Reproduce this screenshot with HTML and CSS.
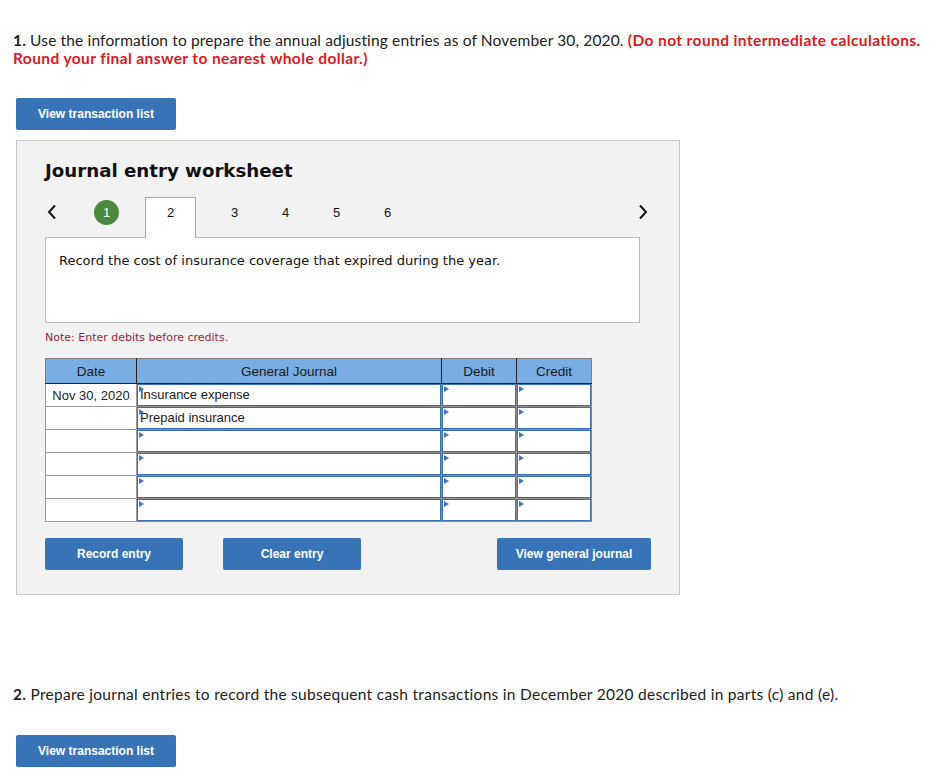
FILE: index.html
```html
<!DOCTYPE html>
<html lang="en">
<head>
<meta charset="utf-8">
<title>Journal entry worksheet</title>
<link rel="stylesheet" href="styles.css">
</head>
<body>
<div class="page">
  <p class="question q1"><b>1.</b> Use the information to prepare the annual adjusting entries as of November 30, 2020. <span class="warn">(Do not round intermediate calculations.</span><br><span class="warn">Round your final answer to nearest whole dollar.)</span></p>
  <button class="btn btn-list">View transaction list</button>

  <section class="panel">
    <h2 class="title">Journal entry worksheet</h2>
    <div class="nav">
      <span class="chev chev-left"><svg width="10" height="16" viewBox="0 0 10 16"><path d="M8 1.5 L2 8 L8 14.5" fill="none" stroke="#111" stroke-width="2"/></svg></span>
      <span class="step"><span class="done">1</span></span>
      <span class="step tab">2</span>
      <span class="step">3</span>
      <span class="step">4</span>
      <span class="step">5</span>
      <span class="step">6</span>
      <span class="chev chev-right"><svg width="10" height="16" viewBox="0 0 10 16"><path d="M2 1.5 L8 8 L2 14.5" fill="none" stroke="#111" stroke-width="2"/></svg></span>
    </div>
    <div class="prompt">Record the cost of insurance coverage that expired during the year.</div>
    <p class="note">Note: Enter debits before credits.</p>

    <table class="journal">
      <thead>
        <tr><th class="c-date">Date</th><th class="c-gj">General Journal</th><th class="c-amt">Debit</th><th class="c-amt">Credit</th></tr>
      </thead>
      <tbody>
        <tr><td class="date">Nov 30, 2020</td><td class="in"><div class="box">Insurance expense<i class="tri"></i></div></td><td class="in"><div class="box"><i class="tri"></i></div></td><td class="in"><div class="box"><i class="tri"></i></div></td></tr>
        <tr><td class="date"></td><td class="in"><div class="box">Prepaid insurance<i class="tri"></i></div></td><td class="in"><div class="box"><i class="tri"></i></div></td><td class="in"><div class="box"><i class="tri"></i></div></td></tr>
        <tr><td class="date"></td><td class="in"><div class="box"><i class="tri"></i></div></td><td class="in"><div class="box"><i class="tri"></i></div></td><td class="in"><div class="box"><i class="tri"></i></div></td></tr>
        <tr><td class="date"></td><td class="in"><div class="box"><i class="tri"></i></div></td><td class="in"><div class="box"><i class="tri"></i></div></td><td class="in"><div class="box"><i class="tri"></i></div></td></tr>
        <tr><td class="date"></td><td class="in"><div class="box"><i class="tri"></i></div></td><td class="in"><div class="box"><i class="tri"></i></div></td><td class="in"><div class="box"><i class="tri"></i></div></td></tr>
        <tr><td class="date"></td><td class="in"><div class="box"><i class="tri"></i></div></td><td class="in"><div class="box"><i class="tri"></i></div></td><td class="in"><div class="box"><i class="tri"></i></div></td></tr>
      </tbody>
    </table>

    <div class="actions">
      <button class="btn btn-record">Record entry</button>
      <button class="btn btn-clear">Clear entry</button>
      <button class="btn btn-journal">View general journal</button>
    </div>
  </section>

  <p class="question q2"><b>2.</b> Prepare journal entries to record the subsequent cash transactions in December 2020 described in parts (c) and (e).</p>
  <button class="btn btn-list">View transaction list</button>
</div>
</body>
</html>
```
FILE: styles.css
```css
* { box-sizing: border-box; }
html, body { margin: 0; padding: 0; background: #fff; }
.page {
  padding: 31px 0 0 16px;
  font-family: Lato, "Liberation Sans", sans-serif;
  color: #222;
}
.question {
  margin: 0 0 0 -3px;
  font-size: 15.5px;
  letter-spacing: 0.15px;
  line-height: 18px;
  width: 925px;
}
.q2 { letter-spacing: 0.28px; }
.question b { font-weight: 700; }
.warn { color: #e0191e; font-weight: 700; letter-spacing: 0.4px; }

.btn {
  display: block;
  flex: none;
  height: 32px;
  border: 0;
  border-radius: 2px;
  background: #3873b7;
  color: #fff;
  font-family: "Liberation Sans", Arial, sans-serif;
  font-weight: 700;
  font-size: 12px;
  padding: 0;
  cursor: pointer;
}
.btn-list { width: 160px; margin-top: 31px; }

.panel {
  width: 664px;
  height: 455px;
  margin-top: 10px;
  background: #f2f2f2;
  border: 1px solid #c8c8c8;
  padding: 19px 39px 0 28px;
}
.title {
  margin: 0;
  font-family: "DejaVu Sans", sans-serif;
  font-weight: 700;
  font-size: 18.2px;
  line-height: 22px;
  color: #111;
}
.nav {
  display: flex;
  align-items: flex-start;
  height: 40px;
  margin: 15px -12px 0 0;
  font-family: "Liberation Sans", Arial, sans-serif;
  font-size: 13px;
  color: #111;
}
.chev { display: flex; align-items: center; height: 30px; width: 36px; padding-left: 2px; }
.chev-right { margin-left: auto; width: auto; padding: 0 4px 0 0; }
.step {
  width: 51px;
  height: 30px;
  display: flex;
  align-items: center;
  justify-content: center;
}
.done {
  width: 25px;
  height: 25px;
  border-radius: 50%;
  background: #4b8a3d;
  color: #fff;
  display: flex;
  align-items: center;
  justify-content: center;
  font-size: 13px;
}
.tab {
  width: 51px;
  margin: 0 13px;
  background: #fff;
  border: 1px solid #a8a8a8;
  border-bottom: 0;
  position: relative;
  z-index: 1;
  height: 41px;
  padding-bottom: 11px;
}
.prompt {
  height: 86px;
  margin-top: 0;
  background: #fff;
  border: 1px solid #bdbdbd;
  padding: 15px 13px;
  font-family: "DejaVu Sans", sans-serif;
  font-size: 13px;
  line-height: 16px;
  color: #111;
}
.note {
  margin: 8px 0 0;
  font-family: "DejaVu Sans", sans-serif;
  font-size: 11px;
  line-height: 14px;
  color: #a11b3b;
}

.journal {
  margin-top: 13px;
  border-collapse: collapse;
  width: 547px;
  table-layout: fixed;
  font-family: "Liberation Sans", Arial, sans-serif;
  font-size: 13px;
  color: #222;
  border: 1px solid #7f7f7f;
}
.journal th {
  height: 25px;
  background: #79ade3;
  font-weight: 400;
  font-size: 13.5px;
  color: #1a1a1a;
  border-right: 1px solid #222;
  border-bottom: 1px solid #222;
  padding: 0;
}
.journal th:last-child { border-right: 1px solid #7f7f7f; }
.c-date { width: 91px; }
.c-gj { width: 305px; }
.c-amt { width: 75px; }
.journal td {
  height: 23px;
  padding: 0;
  border: 1px solid #8a8a8a;
  background: #fff;
}
.journal td.date { text-align: center; font-size: 13px; border-color: #9a9a9a; }
.journal tbody tr:first-child td { border-top: 0; }
.journal td.in { background: #777; }
.box {
  position: relative;
  height: 22px;
  border: 1px solid #3e71b4;
  background: #fff;
  padding: 1px 0 0 2px;
  font-size: 13px;
  line-height: 18px;
}
.tri {
  position: absolute;
  left: 1px;
  top: 1px;
  width: 0;
  height: 0;
  border-left: 5px solid #3f78c4;
  border-top: 3px solid transparent;
  border-bottom: 3px solid transparent;
}

.actions {
  display: flex;
  margin-top: 16px;
}
.btn-record, .btn-clear { width: 138px; }
.btn-clear { margin-left: 40px; }
.btn-journal { width: 154px; margin-left: 136px; }

.q2 { margin-top: 90px; }
.q2 + .btn-list { margin-top: 32px; }
```
